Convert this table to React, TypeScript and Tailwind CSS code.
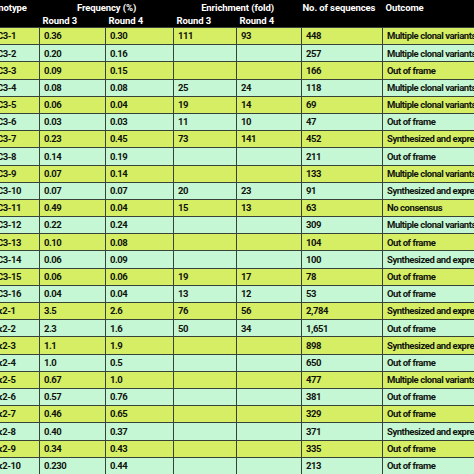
import React from 'react';

// ---------------------------------------------------------------------------
// Data
// ---------------------------------------------------------------------------

interface Row {
  id: string;
  f3: string;
  f4: string;
  e3: string;
  e4: string;
  seqs: string;
  outcome: string;
}

const MCV = 'Multiple clonal variants';
const OOF = 'Out of frame';
const SAE = 'Synthesized and expressed';

const ROWS: Row[] = [
  { id: 'C3-1', f3: '0.36', f4: '0.30', e3: '111', e4: '93', seqs: '448', outcome: MCV },
  { id: 'C3-2', f3: '0.20', f4: '0.16', e3: '', e4: '', seqs: '257', outcome: MCV },
  { id: 'C3-3', f3: '0.09', f4: '0.15', e3: '', e4: '', seqs: '166', outcome: OOF },
  { id: 'C3-4', f3: '0.08', f4: '0.08', e3: '25', e4: '24', seqs: '118', outcome: MCV },
  { id: 'C3-5', f3: '0.06', f4: '0.04', e3: '19', e4: '14', seqs: '69', outcome: MCV },
  { id: 'C3-6', f3: '0.03', f4: '0.03', e3: '11', e4: '10', seqs: '47', outcome: OOF },
  { id: 'C3-7', f3: '0.23', f4: '0.45', e3: '73', e4: '141', seqs: '452', outcome: SAE },
  { id: 'C3-8', f3: '0.14', f4: '0.19', e3: '', e4: '', seqs: '211', outcome: OOF },
  { id: 'C3-9', f3: '0.07', f4: '0.14', e3: '', e4: '', seqs: '133', outcome: MCV },
  { id: 'C3-10', f3: '0.07', f4: '0.07', e3: '20', e4: '23', seqs: '91', outcome: SAE },
  { id: 'C3-11', f3: '0.49', f4: '0.04', e3: '15', e4: '13', seqs: '63', outcome: 'No consensus' },
  { id: 'C3-12', f3: '0.22', f4: '0.24', e3: '', e4: '', seqs: '309', outcome: MCV },
  { id: 'C3-13', f3: '0.10', f4: '0.08', e3: '', e4: '', seqs: '104', outcome: OOF },
  { id: 'C3-14', f3: '0.06', f4: '0.09', e3: '', e4: '', seqs: '100', outcome: SAE },
  { id: 'C3-15', f3: '0.06', f4: '0.06', e3: '19', e4: '17', seqs: '78', outcome: OOF },
  { id: 'C3-16', f3: '0.04', f4: '0.04', e3: '13', e4: '12', seqs: '53', outcome: OOF },
  { id: 'κ2-1', f3: '3.5', f4: '2.6', e3: '76', e4: '56', seqs: '2,784', outcome: SAE },
  { id: 'κ2-2', f3: '2.3', f4: '1.6', e3: '50', e4: '34', seqs: '1,651', outcome: OOF },
  { id: 'κ2-3', f3: '1.1', f4: '1.9', e3: '', e4: '', seqs: '898', outcome: SAE },
  { id: 'κ2-4', f3: '1.0', f4: '0.5', e3: '', e4: '', seqs: '650', outcome: OOF },
  { id: 'κ2-5', f3: '0.67', f4: '1.0', e3: '', e4: '', seqs: '477', outcome: MCV },
  { id: 'κ2-6', f3: '0.57', f4: '0.76', e3: '', e4: '', seqs: '381', outcome: OOF },
  { id: 'κ2-7', f3: '0.46', f4: '0.65', e3: '', e4: '', seqs: '329', outcome: OOF },
  { id: 'κ2-8', f3: '0.40', f4: '0.37', e3: '', e4: '', seqs: '371', outcome: SAE },
  { id: 'κ2-9', f3: '0.34', f4: '0.43', e3: '', e4: '', seqs: '335', outcome: OOF },
  { id: 'κ2-10', f3: '0.230', f4: '0.44', e3: '', e4: '', seqs: '213', outcome: OOF },
];

const TD = 'border border-[#37433a] px-[4px] py-0 whitespace-nowrap overflow-hidden';

// ---------------------------------------------------------------------------
// Page
// ---------------------------------------------------------------------------

export default function App() {
  return (
    <div
      className="h-[474px] w-[474px] overflow-hidden bg-[#c6f7d4]"
      style={{ fontFamily: 'Roboto, "Liberation Sans", sans-serif' }}
    >
      <table className="ml-[-8px] w-[510px] table-fixed border-collapse text-[9.5px] font-bold leading-none tracking-[-0.45px] text-[#10140e]">
        <colgroup>
          <col className="w-[47px]" />
          <col className="w-[66px]" />
          <col className="w-[68px]" />
          <col className="w-[63px]" />
          <col className="w-[65px]" />
          <col className="w-[81px]" />
          <col className="w-[120px]" />
        </colgroup>
        <thead className="bg-black text-[9.5px] tracking-[-0.1px] text-white">
          <tr className="h-[14px]">
            <th className="overflow-hidden px-0 pt-[2px] text-left font-bold whitespace-nowrap">
              <span className="ml-[-8px] inline-block">Clonotype</span>
            </th>
            <th colSpan={2} className="pt-[2px] text-center font-bold">Frequency (%)</th>
            <th colSpan={2} className="pt-[2px] text-center font-bold">Enrichment (fold)</th>
            <th className="px-[1px] pt-[2px] text-left font-bold whitespace-nowrap">No. of sequences</th>
            <th className="px-[3px] pt-[2px] text-left font-bold">Outcome</th>
          </tr>
          <tr className="h-[13.5px]">
            <th />
            <th className="px-[3px] text-left font-bold">Round 3</th>
            <th className="px-[3px] text-left font-bold">Round 4</th>
            <th className="px-[3px] text-left font-bold">Round 3</th>
            <th className="px-[3px] text-left font-bold">Round 4</th>
            <th />
            <th />
          </tr>
        </thead>
        <tbody>
          {ROWS.map((r, i) => (
            <tr key={r.id} className={`h-[17.2px] ${i % 2 === 0 ? 'bg-[#d6ee64]' : 'bg-[#c6f7d4]'}`}>
              <td className={TD}>{r.id}</td>
              <td className={TD}>{r.f3}</td>
              <td className={TD}>{r.f4}</td>
              <td className={TD}>{r.e3}</td>
              <td className={TD}>{r.e4}</td>
              <td className={TD}>{r.seqs}</td>
              <td className={TD}>{r.outcome}</td>
            </tr>
          ))}
        </tbody>
      </table>
    </div>
  );
}
